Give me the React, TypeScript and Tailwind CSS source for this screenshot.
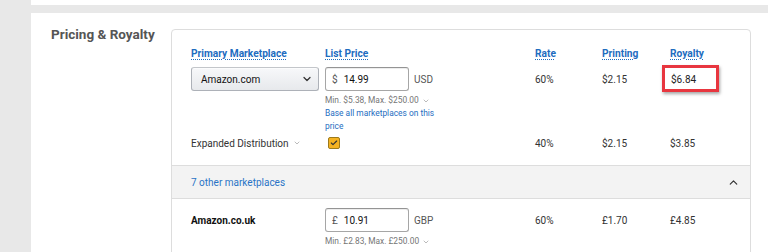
import { ChevronDown, ChevronUp, Check } from 'lucide-react'

const COLS = 'grid grid-cols-[134px_210px_67px_68px_1fr]'

function Header({ children }: { children: string }) {
  return (
    <span className="text-[10.2px] font-bold text-[#1e6dbf] underline decoration-dotted decoration-[#1e6dbf] underline-offset-[2px]">
      {children}
    </span>
  )
}

function PriceInput({ symbol, value, currency }: { symbol: string; value: string; currency: string }) {
  return (
    <div className="flex items-center">
      <div className="w-[84px] h-[24px] flex items-center pl-[6px] rounded-[3px] border border-[#a6a6a6] border-t-[#949494] bg-white shadow-[inset_0_1px_0_rgba(0,0,0,0.07)] text-[10px] text-[#111]">
        <span className="text-[#555]">{symbol}</span>
        <span className="ml-[6px]">{value}</span>
      </div>
      <span className="ml-[5px] text-[10px] text-[#555]">{currency}</span>
    </div>
  )
}

function MinMax({ text }: { text: string }) {
  return (
    <div className="flex items-center gap-[3px] text-[8.4px] leading-[13px] text-[#767676]">
      {text}
      <ChevronDown className="w-[8px] h-[8px] text-[#999]" strokeWidth={2} />
    </div>
  )
}

function Cell({ children }: { children: string }) {
  return <div className="h-[24px] flex items-center text-[10px] text-[#333]">{children}</div>
}

export default function App() {
  return (
    <div className="w-[768px] h-[252px] overflow-hidden bg-[#e8e8e8] pl-[31px] font-['Roboto',sans-serif]">
      <div className="h-[5px] bg-white" />
      <div className="mt-[8px] bg-white h-[300px] flex items-start pl-[20px]">
        <div className="w-[120px] shrink-0 mt-[13px]">
          <h2 className="text-[13.5px] leading-[16px] font-bold text-[#555]">Pricing &amp; Royalty</h2>
        </div>

        <div className="w-[580px] mt-[16px] border border-[#dddddd] rounded-[4px]">
          <div className="px-[19px] pt-[14px] pb-[14px]">
            <div className={`${COLS} h-[16px] leading-[16px] items-center`}>
              <div><Header>Primary Marketplace</Header></div>
              <div><Header>List Price</Header></div>
              <div><Header>Rate</Header></div>
              <div><Header>Printing</Header></div>
              <div><Header>Royalty</Header></div>
            </div>

            <div className={`${COLS} mt-[7px]`}>
              <div>
                <div className="w-[128px] h-[24px] flex items-center justify-between pl-[9px] pr-[5px] rounded-[3px] border border-[#adb1b8] border-t-[#c3c6ca] bg-gradient-to-b from-[#f7f8fa] to-[#e7e9ec] shadow-[0_1px_0_rgba(255,255,255,0.6)_inset] text-[10px] text-[#111]">
                  <span>Amazon.com</span>
                  <ChevronDown className="w-[12px] h-[12px] text-[#333]" strokeWidth={2.5} />
                </div>
              </div>
              <div>
                <PriceInput symbol="$" value="14.99" currency="USD" />
                <div className="mt-[3px]">
                  <MinMax text="Min. $5.38, Max. $250.00" />
                  <div className="text-[8.4px] leading-[13px] text-[#1e6dbf] w-[115px]">
                    Base all marketplaces on this price
                  </div>
                </div>
              </div>
              <Cell>60%</Cell>
              <Cell>$2.15</Cell>
              <div className="relative h-[24px] flex items-center text-[10px] text-[#222] pl-[1px]">
                $6.84
                <span className="absolute -left-[8px] -top-[2px] w-[57px] h-[27px] border-[3px] border-[#e8363f] shadow-[1px_2px_3px_rgba(0,0,0,0.35)]" />
              </div>
            </div>

            <div className={`${COLS} mt-[2px] h-[16px] items-center text-[10px] text-[#333]`}>
              <div className="flex items-center gap-[4px]">
                Expanded Distribution
                <ChevronDown className="w-[8px] h-[8px] text-[#999]" strokeWidth={2} />
              </div>
              <div className="pl-[3px]">
                <div className="w-[12px] h-[12px] rounded-[2px] bg-[#f5b322] border border-[#9c7a1c] flex items-center justify-center">
                  <Check className="w-[8px] h-[8px] text-[#333]" strokeWidth={3.5} />
                </div>
              </div>
              <div>40%</div>
              <div>$2.15</div>
              <div>$3.85</div>
            </div>
          </div>

          <div className="h-[34px] border-y border-[#dddddd] bg-[#f3f3f3] flex items-center justify-between pl-[19px] pr-[10px]">
            <span className="text-[10px] text-[#2a73c6]">7 other marketplaces</span>
            <ChevronUp className="w-[13px] h-[13px] text-[#333]" strokeWidth={2.2} />
          </div>

          <div className="px-[19px] pt-[9px] pb-[20px]">
            <div className={COLS}>
              <div className="h-[24px] flex items-center text-[10px] font-bold text-[#111]">Amazon.co.uk</div>
              <div>
                <PriceInput symbol="£" value="10.91" currency="GBP" />
                <div className="mt-[3px]">
                  <MinMax text="Min. £2.83, Max. £250.00" />
                </div>
              </div>
              <Cell>60%</Cell>
              <Cell>£1.70</Cell>
              <Cell>£4.85</Cell>
            </div>
          </div>
        </div>
      </div>
    </div>
  )
}
